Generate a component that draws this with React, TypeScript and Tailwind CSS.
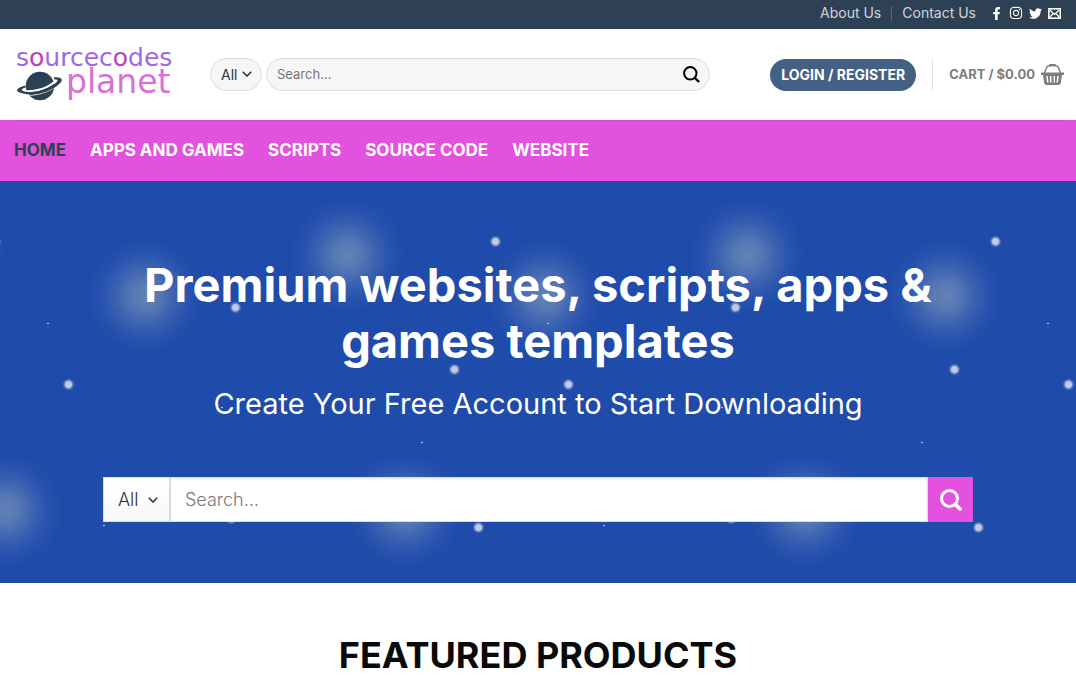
import { FaFacebookF, FaInstagram, FaTwitter } from "react-icons/fa";

const navItems = ["Home", "Apps and Games", "Scripts", "Source Code", "Website"];

const bokeh = [
  { x: 107, y: 74 },
  { x: 165, y: 329 },
  { x: 305, y: 115 },
];

const bokehSmall = [
  { x: 345, y: 60 },
  { x: 85, y: 126 },
  { x: 304, y: 188 },
  { x: 418, y: 203 },
  { x: 328, y: 346 },
  { x: 81, y: 337 },
];

const specks = [
  { x: 398, y: 142 },
  { x: 272, y: 261 },
  { x: 454, y: 344 },
  { x: 72, y: 226 },
];

function Snow() {
  return (
    <svg className="absolute inset-0 w-full h-full" aria-hidden="true">
      <defs>
        <radialGradient id="glow">
          <stop offset="0" stopColor="#ffffd0" stopOpacity="0.3" />
          <stop offset="0.2" stopColor="#ffffd0" stopOpacity="0.26" />
          <stop offset="0.5" stopColor="#ffffe0" stopOpacity="0.13" />
          <stop offset="0.75" stopColor="#ffffff" stopOpacity="0.04" />
          <stop offset="1" stopColor="#ffffff" stopOpacity="0" />
        </radialGradient>
        <radialGradient id="flake">
          <stop offset="0" stopColor="#c3cce8" />
          <stop offset="0.5" stopColor="#bcc7e5" />
          <stop offset="0.7" stopColor="#a9b8d8" stopOpacity="0.5" />
          <stop offset="1" stopColor="#a9b8d8" stopOpacity="0" />
        </radialGradient>
        <pattern id="far" x="240" width="400" height="600" patternUnits="userSpaceOnUse">
          {bokeh.map((c, i) => (
            <circle key={i} cx={c.x} cy={c.y} r="58" fill="url(#glow)" />
          ))}
        </pattern>
        <pattern id="near" x="150" width="500" height="600" patternUnits="userSpaceOnUse">
          {bokehSmall.map((c, i) => (
            <circle key={i} cx={c.x + 0.5} cy={c.y + 0.5} r="6" fill="url(#flake)" />
          ))}
          {specks.map((c, i) => (
            <circle key={i} cx={c.x} cy={c.y + 0.5} r="0.8" fill="#dde4f5" />
          ))}
        </pattern>
      </defs>
      <rect width="100%" height="100%" fill="url(#far)" />
      <rect width="100%" height="100%" fill="url(#near)" />
    </svg>
  );
}

function Planet() {
  return (
    <svg className="mt-1 h-[30px] w-[46px] shrink-0" viewBox="0 0 46 30" aria-hidden="true">
      <circle cx="24" cy="15" r="14.3" fill="#2e4053" />
      <path d="M5 19.5 C13 22 30 19 39 10.5" fill="none" stroke="#fff" strokeWidth="2.2" />
      <path d="M7 23.6 C17 26 33 22 42 14" fill="none" stroke="#fff" strokeWidth="0.8" />
      <path
        d="M37.5 6.5 C44 5.6 48 7.6 44.5 11.8 C37 20.5 20 25 8 22.8 C-1 21.5 -2 17.5 9.5 14.5 L9.5 16.4 C5 17.8 4.5 19.4 8.5 20.4 C19 22.5 33 18 40.5 11.2 C42.5 9.2 41.5 8.3 38.5 8.6 Z"
        fill="#2e4053"
      />
    </svg>
  );
}

function Logo() {
  return (
    <a href="/" className="block w-[161px] shrink-0 font-['DejaVu_Sans',sans-serif]">
      <span className="block text-[25px] leading-[18px] text-[#9d68e6]">
        s<span className="text-[#b83fc0]">o</span>urcec<span className="text-[#b83fc0]">o</span>des
      </span>
      <span className="flex items-start gap-1">
        <Planet />
        <span className="text-[33px] leading-[30px] text-[#da70d6]">planet</span>
      </span>
    </a>
  );
}

function Chevron({ className }: { className: string }) {
  return (
    <svg className={className} viewBox="0 0 10 6" fill="none" stroke="#333" strokeWidth="1.6" aria-hidden="true">
      <path d="M0.8 0.8 L5 5 L9.2 0.8" />
    </svg>
  );
}

function SearchIcon({ className }: { className: string }) {
  return (
    <svg className={className} viewBox="0 0 22 22" fill="none" stroke="currentColor" aria-hidden="true">
      <circle cx="9.5" cy="9.5" r="8" strokeWidth="3" />
      <path d="M15.5 15.5 L20 20" strokeWidth="3.6" strokeLinecap="round" />
    </svg>
  );
}

function Basket() {
  return (
    <svg className="w-[23px] h-[21px]" viewBox="0 0 23 21" aria-hidden="true">
      <path d="M3.5 9 L5.5 3.5 Q6 2 8 2 M19.5 9 L17.5 3.5 Q17 2 15 2" fill="none" stroke="#7d7d7a" strokeWidth="1.5" />
      <path d="M8 1.6 Q11.5 0.6 15 1.6" fill="none" stroke="#7d7d7a" strokeWidth="2.4" />
      <path d="M0 8.5 H23 V11 H0 Z" fill="#7d7d7a" />
      <path d="M2 11 H21 L19.8 19 Q19.5 21 17.5 21 H5.5 Q3.5 21 3.2 19 Z" fill="#7d7d7a" />
      <path d="M6 12 L6.8 18.5 M9.7 12 V18.5 M13.3 12 V18.5 M17 12 L16.2 18.5" stroke="#fff" strokeWidth="1.5" />
    </svg>
  );
}

function TopBar() {
  return (
    <div className="flex h-[29px] items-center justify-end bg-[#2e4053] pr-[15px] pb-[3px] text-[14px] text-[#d0d5da]">
      <a href="/about" className="leading-4">About Us</a>
      <span className="mx-[10px] h-[15px] w-px bg-[#57667a]" />
      <a href="/contact" className="leading-4">Contact Us</a>
      <div className="ml-[14px] flex items-center gap-[6px] text-white">
        <a href="#facebook" aria-label="Facebook" className="flex w-[13px] justify-center">
          <FaFacebookF size={13} />
        </a>
        <a href="#instagram" aria-label="Instagram">
          <FaInstagram size={14} />
        </a>
        <a href="#twitter" aria-label="Twitter">
          <FaTwitter size={13} />
        </a>
        <a href="#email" aria-label="Email">
          <svg className="h-[11px] w-[13px]" viewBox="0 0 13 11" fill="none" stroke="#fff" aria-hidden="true">
            <rect x="0.8" y="0.8" width="11.4" height="9.4" strokeWidth="1.6" />
            <path d="M2 2.2 L6.5 6.4 L11 2.2 M2 9 L5 5.6 M11 9 L8 5.6" strokeWidth="1.3" />
          </svg>
        </a>
      </div>
    </div>
  );
}

function Header() {
  return (
    <header className="flex h-[91px] items-center bg-white pl-4 pr-3">
      <Logo />
      <form className="ml-[33px] flex flex-1 gap-1" onSubmit={(e) => e.preventDefault()}>
        <div className="relative">
          <select
            aria-label="Category"
            className="h-[33px] w-[52px] appearance-none rounded-full border border-[#ddd] bg-[#f6f6f6] pl-[10px] text-[14px] text-[#333]"
          >
            <option>All</option>
          </select>
          <Chevron className="pointer-events-none absolute right-[10px] top-[13px] h-[6px] w-[10px]" />
        </div>
        <div className="flex h-[33px] min-w-0 flex-1 items-center rounded-full border border-[#ddd] bg-[#f6f6f6] pl-[10px] pr-[9px]">
          <input
            type="search"
            aria-label="Search"
            placeholder="Search…"
            className="min-w-0 flex-1 bg-transparent text-[13px] outline-none placeholder:text-[#777]"
          />
          <button type="submit" aria-label="Search" className="text-black">
            <svg className="h-[17px] w-[17px]" viewBox="0 0 17 17" fill="none" stroke="currentColor" aria-hidden="true">
              <circle cx="7.3" cy="7.3" r="6.2" strokeWidth="2" />
              <path d="M12 12 L16 16" strokeWidth="2.4" />
            </svg>
          </button>
        </div>
      </form>
      <a
        href="/login"
        className="ml-[60px] flex h-8 w-[146px] items-center justify-center rounded-full bg-[#446084] text-[14px] font-bold whitespace-nowrap text-white"
      >
        LOGIN / REGISTER
      </a>
      <span className="mx-4 h-[30px] w-px bg-[#e3e3e3]" />
      <a href="/cart" className="flex items-center gap-[6px] text-[13px] font-bold whitespace-nowrap text-[#7d7d7a]">
        CART / $0.00
        <Basket />
      </a>
    </header>
  );
}

function Hero() {
  return (
    <section className="relative bg-[#1f4caa] pt-[76px] pb-[61px] text-center text-white">
      <Snow />
      <div className="relative mx-auto max-w-[870px]">
        <h1 className="text-[47px] font-bold leading-[56px]">
          Premium websites, scripts, apps &amp;
          <br />
          games templates
        </h1>
        <p className="mt-[13px] text-[29px] leading-[44px]">Create Your Free Account to Start Downloading</p>
        <form className="mt-[51px] flex h-[45px]" onSubmit={(e) => e.preventDefault()}>
          <div className="relative">
            <select
              aria-label="Category"
              className="h-full w-[67px] appearance-none border border-[#ddd] bg-gradient-to-b from-white to-[#f8f8f8] pl-[14px] text-[18px] font-light text-[#333]"
            >
              <option>All</option>
            </select>
            <Chevron className="pointer-events-none absolute right-3 top-5 h-[6px] w-[10px]" />
          </div>
          <input
            type="search"
            aria-label="Search products"
            placeholder="Search…"
            className="h-full min-w-0 flex-1 border border-[#ddd] bg-white px-[14px] text-[18px] font-light text-[#333] shadow-[inset_0_1px_2px_rgba(0,0,0,0.1)] outline-none placeholder:text-[#777]"
          />
          <button type="submit" aria-label="Search" className="flex w-[45px] items-center justify-center bg-[#e252df]">
            <SearchIcon className="h-[22px] w-[22px]" />
          </button>
        </form>
      </div>
    </section>
  );
}

export default function App() {
  return (
    <div className="bg-white font-[Inter,sans-serif]">
      <TopBar />
      <Header />
      <nav className="h-[61px] bg-[#e252df] px-[14px]">
        <ul className="flex h-full items-center gap-6 border-t border-[#cf4dcf] text-[17px] font-bold uppercase text-white">
          {navItems.map((item, i) => (
            <li key={item}>
              <a href="#" className={i === 0 ? "text-[#2e4053]" : ""}>
                {item}
              </a>
            </li>
          ))}
        </ul>
      </nav>
      <Hero />
      <h2 className="pt-[50px] pb-1 text-center text-[36px] font-bold leading-[44px] text-[#0a0a0a]">FEATURED PRODUCTS</h2>
    </div>
  );
}
